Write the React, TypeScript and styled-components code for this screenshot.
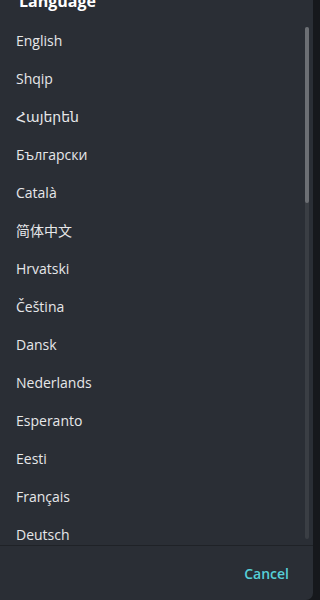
import styled, { createGlobalStyle } from 'styled-components';

const languages = [
  'English',
  'Shqip',
  'Հայերեն',
  'Български',
  'Català',
  '简体中文',
  'Hrvatski',
  'Čeština',
  'Dansk',
  'Nederlands',
  'Esperanto',
  'Eesti',
  'Français',
  'Deutsch',
  'Ελληνικά',
  'עברית',
  'Magyar',
  'Íslenska',
  'Italiano',
  '日本語',
  '한국어',
  'Latviešu',
  'Lietuvių',
  'Norsk',
  'Polski',
  'Português',
  'Română',
  'Русский',
  'Српски',
  'Slovenčina',
  'Slovenščina',
  'Español',
  'Svenska',
  'ไทย',
  'Türkçe',
  'Українська',
  'Tiếng Việt',
  'Suomi',
  'Bahasa Indonesia',
  '繁體中文',
];

const ROW = 38;
const VIEW = 523;
const TRACK = 512;

const App = () => {
  const thumb = Math.round((TRACK * VIEW) / (languages.length * ROW));

  return (
    <>
      <GlobalStyle />
      <Dialog>
        <Title>Language</Title>
        <ListWrap>
          <List>
            {languages.map((lang) => (
              <Item key={lang}>{lang}</Item>
            ))}
          </List>
          <Track>
            <Thumb style={{ height: thumb }} />
          </Track>
        </ListWrap>
        <Footer>
          <CancelButton type="button">Cancel</CancelButton>
        </Footer>
      </Dialog>
    </>
  );
};

const GlobalStyle = createGlobalStyle`
  html, body {
    margin: 0;
    padding: 0;
    background: #16181c;
    overflow: hidden;
  }

  body {
    font-family: 'Open Sans', 'Noto Sans', 'DejaVu Sans', 'Noto Sans CJK SC', sans-serif;
  }
`;

const Dialog = styled.section`
  display: flex;
  flex-direction: column;
  width: 313px;
  height: 614px;
  margin-top: -14px;

  background-color: #2a2e35;
  border-radius: 0 0 7px 0;
  overflow: hidden;
`;

const Title = styled.h2`
  margin: 0;
  padding: 4px 19px 0;

  font-size: 16px;
  font-weight: 700;
  line-height: 22px;
  color: #ffffff;
`;

const ListWrap = styled.div`
  position: relative;
  height: ${VIEW}px;
  margin-top: 10px;
`;

const List = styled.ul`
  height: 100%;
  margin: 0;
  padding: 0;
  list-style: none;

  overflow-y: auto;
  scrollbar-width: none;

  &::-webkit-scrollbar {
    display: none;
  }
`;

const Item = styled.li`
  height: ${ROW}px;
  padding: 0 16px;

  font-size: 14px;
  line-height: ${ROW}px;
  color: #e6e7e9;
  cursor: pointer;
`;

/* 스크롤바 오버레이 */
const Track = styled.div`
  position: absolute;
  top: 5px;
  right: 4px;

  width: 4px;
  height: ${TRACK}px;

  border-radius: 2px;
  background-color: #3a3e44;
`;

const Thumb = styled.div`
  width: 100%;
  border-radius: 2px;
  background-color: #6c6f74;
`;

const Footer = styled.footer`
  display: flex;
  justify-content: flex-end;
  align-items: center;
  flex: 1;
  padding: 0 24px 0 0;

  border-top: 1px solid #1f2227;
`;

const CancelButton = styled.button`
  padding: 0;
  border: none;
  background: none;

  font-family: inherit;
  font-size: 14px;
  font-weight: 600;
  color: #56d0d8;
  cursor: pointer;
`;

export default App;
